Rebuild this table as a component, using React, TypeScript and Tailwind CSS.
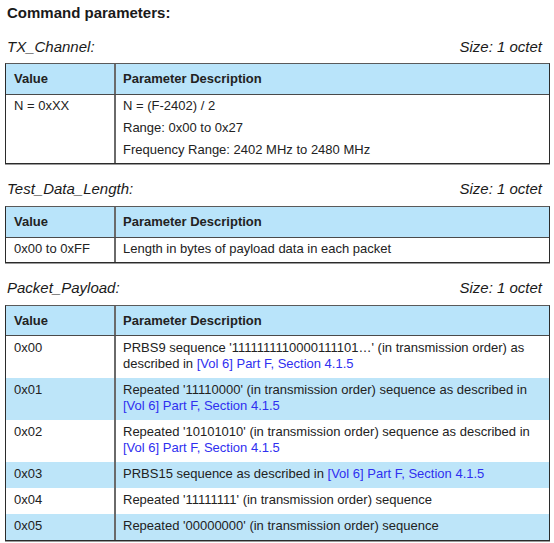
import React from "react";

type Row = { value: string; desc: React.ReactNode; shaded?: boolean };

const ref = <span className="text-[#2f2ff0]">[Vol 6] Part F, Section 4.1.5</span>;

function Label({ name }: { name: string }) {
  return (
    <div className="flex justify-between pl-[2px] pr-[8px] text-[15px] leading-[18px] italic text-[#1a1a1a]">
      <span>{name}</span>
      <span>Size: 1 octet</span>
    </div>
  );
}

function Table({
  rows,
  headH,
  cellPad,
}: {
  rows: Row[];
  headH: string;
  cellPad: string;
}) {
  return (
    <div className="border border-[#2b2b2b] border-t-[#5a5a5a] shadow-[0_1px_0_#9a9a9a] text-[13px] leading-[16px] text-[#222]">
      <div className={`flex bg-[#b9e4fa] font-bold border-b border-[#4a4a4a] ${headH}`}>
        <div className="w-[110px] shrink-0 border-r-2 border-[#6a6a6a] px-[8px] flex items-center">Value</div>
        <div className="flex-1 px-[7px] flex items-center">Parameter Description</div>
      </div>
      {rows.map((r, i) => (
        <div key={i} className={`flex ${r.shaded ? "bg-[#bde5f9]" : "bg-white"}`}>
          <div className={`w-[110px] shrink-0 border-r-2 border-[#6a6a6a] px-[8px] ${cellPad}`}>{r.value}</div>
          <div className={`flex-1 px-[7px] ${cellPad}`}>{r.desc}</div>
        </div>
      ))}
    </div>
  );
}

export default function App() {
  return (
    <div className="w-[554px] h-[543px] bg-white pl-[5px] pr-[4px] pt-[4px] font-['Liberation_Sans',Arial,sans-serif]">
      <div className="pl-[2px] text-[15px] leading-[18px] font-bold text-[#1a1a1a] mb-[16px]">Command parameters:</div>

      <Label name="TX_Channel:" />
      <div className="mt-[7px]">
        <Table
          headH="h-[31px]"
          cellPad="pt-[3px] pb-[5px]"
          rows={[
            {
              value: "N = 0xXX",
              desc: (
                <div className="flex flex-col gap-[6px]">
                  <div>N = (F-2402) / 2</div>
                  <div>Range: 0x00 to 0x27</div>
                  <div>Frequency Range: 2402 MHz to 2480 MHz</div>
                </div>
              ),
            },
          ]}
        />
      </div>

      <div className="mt-[16px]">
        <Label name="Test_Data_Length:" />
      </div>
      <div className="mt-[8px]">
        <Table
          headH="h-[31px]"
          cellPad="pt-[3px] pb-[5px]"
          rows={[{ value: "0x00 to 0xFF", desc: "Length in bytes of payload data in each packet" }]}
        />
      </div>

      <div className="mt-[16px]">
        <Label name="Packet_Payload:" />
      </div>
      <div className="mt-[8px]">
        <Table
          headH="h-[30px]"
          cellPad="pt-[4px] pb-[6px]"
          rows={[
            {
              value: "0x00",
              desc: (
                <>
                  PRBS9 sequence '1111111110000111101…' (in transmission order) as described in {ref}
                </>
              ),
            },
            {
              value: "0x01",
              shaded: true,
              desc: <>Repeated '11110000' (in transmission order) sequence as described in {ref}</>,
            },
            {
              value: "0x02",
              desc: <>Repeated '10101010' (in transmission order) sequence as described in {ref}</>,
            },
            { value: "0x03", shaded: true, desc: <>PRBS15 sequence as described in {ref}</> },
            { value: "0x04", desc: "Repeated '11111111' (in transmission order) sequence" },
            { value: "0x05", shaded: true, desc: "Repeated '00000000' (in transmission order) sequence" },
          ]}
        />
      </div>
    </div>
  );
}
